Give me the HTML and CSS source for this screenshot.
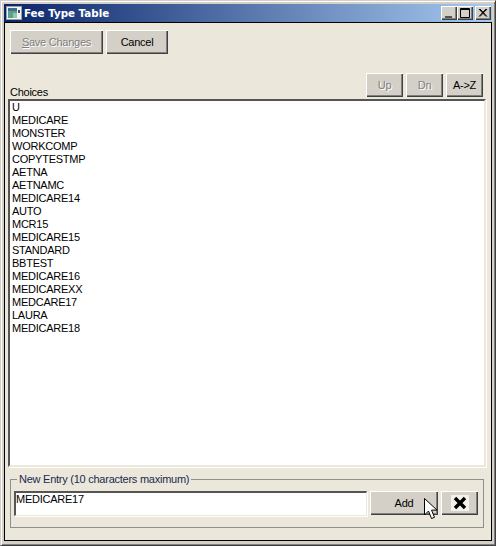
FILE: index.html
```html
<!DOCTYPE html>
<html lang="en">
<head>
<meta charset="utf-8">
<title>Fee Type Table</title>
<link rel="stylesheet" href="styles.css">
</head>
<body>
<div class="window">
  <div class="titlebar">
    <svg class="appicon" width="16" height="16" viewBox="0 0 16 16">
      <rect x="0.5" y="1.5" width="15" height="13" fill="#f2f2ee" stroke="#9aa0a8"/>
      <rect x="2" y="3" width="9" height="10" fill="#5aa08a"/>
      <rect x="2" y="3" width="9" height="3" fill="#3f6f90"/>
      <rect x="7" y="8" width="4" height="5" fill="#9cc4a8"/>
      <rect x="12" y="5" width="2" height="3" fill="#2c4f80"/>
    </svg>
    <span class="title">Fee Type Table</span>
    <div class="winbtns">
      <span class="winbtn"><svg width="16" height="14" viewBox="0 0 16 14"><rect x="4" y="10" width="7" height="2" fill="#555"/></svg></span>
      <span class="winbtn"><svg width="16" height="14" viewBox="0 0 16 14"><path d="M3.5 2.5h9v9h-9zM3 3.5h10" fill="none" stroke="#000"/></svg></span>
      <span class="winbtn close"><svg width="16" height="14" viewBox="0 0 16 14"><path d="M4 3l7 7.5M5 3l7 7.5M11 3l-7 7.5M12 3l-7 7.5" fill="none" stroke="#000"/></svg></span>
    </div>
  </div>
  <div class="client">
    <div class="toprow">
      <button class="btn save" disabled><span><u>S</u>ave Changes</span></button>
      <button class="btn cancel">Cancel</button>
    </div>
    <div class="choicehead">
      <span class="choices">Choices</span>
      <div class="orderbtns">
        <button class="btn order" disabled><span>Up</span></button>
        <button class="btn order" disabled><span>Dn</span></button>
        <button class="btn order">A-&gt;Z</button>
      </div>
    </div>
    <div class="list">
      <div>U</div>
      <div>MEDICARE</div>
      <div>MONSTER</div>
      <div>WORKCOMP</div>
      <div>COPYTESTMP</div>
      <div>AETNA</div>
      <div>AETNAMC</div>
      <div>MEDICARE14</div>
      <div>AUTO</div>
      <div>MCR15</div>
      <div>MEDICARE15</div>
      <div>STANDARD</div>
      <div>BBTEST</div>
      <div>MEDICARE16</div>
      <div>MEDICAREXX</div>
      <div>MEDCARE17</div>
      <div>LAURA</div>
      <div>MEDICARE18</div>
    </div>
    <fieldset class="group">
      <legend>New Entry (10 characters maximum)</legend>
      <div class="entryrow">
        <div class="input">MEDICARE17</div>
        <button class="btn add">Add</button>
        <button class="btn del">
          <svg width="18" height="16" viewBox="0 0 18 16"><rect width="18" height="16" fill="#f4f2ec"/><path d="M4 3l10 10M14 3L4 13" stroke="#000" stroke-width="3.4" fill="none"/></svg>
        </button>
        <svg class="cursor" width="13" height="22" viewBox="0 0 13 22">
          <path d="M0.5 0.5V17l4-4 3 7.5 3-1.2-3-7.2h5.5z" fill="#fff" stroke="#000"/>
        </svg>
      </div>
    </fieldset>
  </div>
</div>
</body>
</html>
```
FILE: styles.css
```css
* { box-sizing: border-box; }
html, body { margin: 0; padding: 0; }
body {
  width: 496px;
  height: 546px;
  overflow: hidden;
  font-family: "Liberation Sans", Arial, sans-serif;
  font-size: 11px;
  letter-spacing: -0.25px;
  color: #000;
  background: #d4d0c8;
}
.window {
  width: 496px;
  height: 546px;
  background: #d4d0c8;
  border-top: 1px solid #d4d0c8;
  border-left: 1px solid #d4d0c8;
  border-right: 1px solid #404040;
  border-bottom: 1px solid #404040;
  box-shadow: inset 1px 1px 0 #fff, inset -1px -1px 0 #808080;
  padding: 3px 3px 4px 3px;
  display: flex;
  flex-direction: column;
}
.titlebar {
  height: 18px;
  flex: none;
  display: flex;
  align-items: center;
  padding: 0 1px 0 2px;
  background: linear-gradient(to right, #0a246a, #a6caf0);
}
.appicon { flex: none; margin-right: 2px; }
.title {
  font-family: "DejaVu Sans", sans-serif;
  font-size: 10.3px;
  letter-spacing: 0;
  font-weight: bold;
  color: #fff;
}
.winbtns { margin-left: auto; display: flex; }
.winbtn {
  width: 16px;
  height: 14px;
  background: #d4d0c8;
  box-shadow: inset 1px 1px 0 #fff, inset -1px -1px 0 #404040, inset -2px -2px 0 #808080;
  display: block;
}
.winbtn svg { display: block; }
.close { margin-left: 2px; }
.client {
  flex: 1;
  min-height: 0;
  background: #ebe7db;
  border: 1px solid #000;
  padding: 7px 5px 0 3px;
  display: flex;
  flex-direction: column;
}
.btn {
  font-family: "Liberation Sans", Arial, sans-serif;
  font-size: 11px;
  letter-spacing: -0.25px;
  color: #000;
  background: #d4d0c8;
  border: 0;
  padding: 0;
  margin: 0;
  height: 24px;
  box-shadow: inset 1px 1px 0 #fff, inset -1px -1px 0 #404040, inset -2px -2px 0 #808080;
  display: flex;
  align-items: center;
  justify-content: center;
}
.btn[disabled] span { color: #808080; text-shadow: 1px 1px 0 #fff; }
.toprow { display: flex; gap: 3px; margin-left: 2px; height: 24px; flex: none; }
.save { width: 93px; }
.cancel { width: 62px; }
.choicehead {
  display: flex;
  align-items: flex-end;
  height: 26px;
  margin-top: 19px;
  flex: none;
}
.choices { margin-left: 2px; line-height: 13px; }
.orderbtns { margin-left: auto; margin-right: 3px; display: flex; gap: 3px; margin-bottom: 2px; height: 24px; }
.order { width: 37px; }
.list {
  width: 478px;
  height: 368px;
  flex: none;
  background: #fff;
  border-top: 2px solid #555;
  border-left: 2px solid #555;
  border-right: 2px solid #ebe7db;
  border-bottom: 2px solid #ebe7db;
  box-shadow: 1px 1px 0 #fff;
  padding: 0 0 0 2px;
  line-height: 13px;
}
.group {
  margin: 6px 0 0 2px;
  width: 474px;
  height: 55px;
  flex: none;
  border: 1px solid #8f8f8f;
  padding: 0 5px 0 3px;
  min-width: 0;
}
.group legend {
  margin-left: 3px;
  padding: 0 2px;
  line-height: 13px;
  color: #1a2a50;
}
.entryrow { display: flex; position: relative; margin-top: 5px; height: 25px; }
.input {
  width: 353px;
  height: 25px;
  background: #fff;
  border-top: 2px solid #555;
  border-left: 2px solid #555;
  border-right: 1px solid #ebe7db;
  border-bottom: 1px solid #ebe7db;
  box-shadow: 1px 1px 0 #fff;
  line-height: 13px;
}
.add { width: 68px; margin-left: 3px; }
.del { width: 37px; margin-left: 3px; }
.cursor { position: absolute; left: 410px; top: 7px; }
```
